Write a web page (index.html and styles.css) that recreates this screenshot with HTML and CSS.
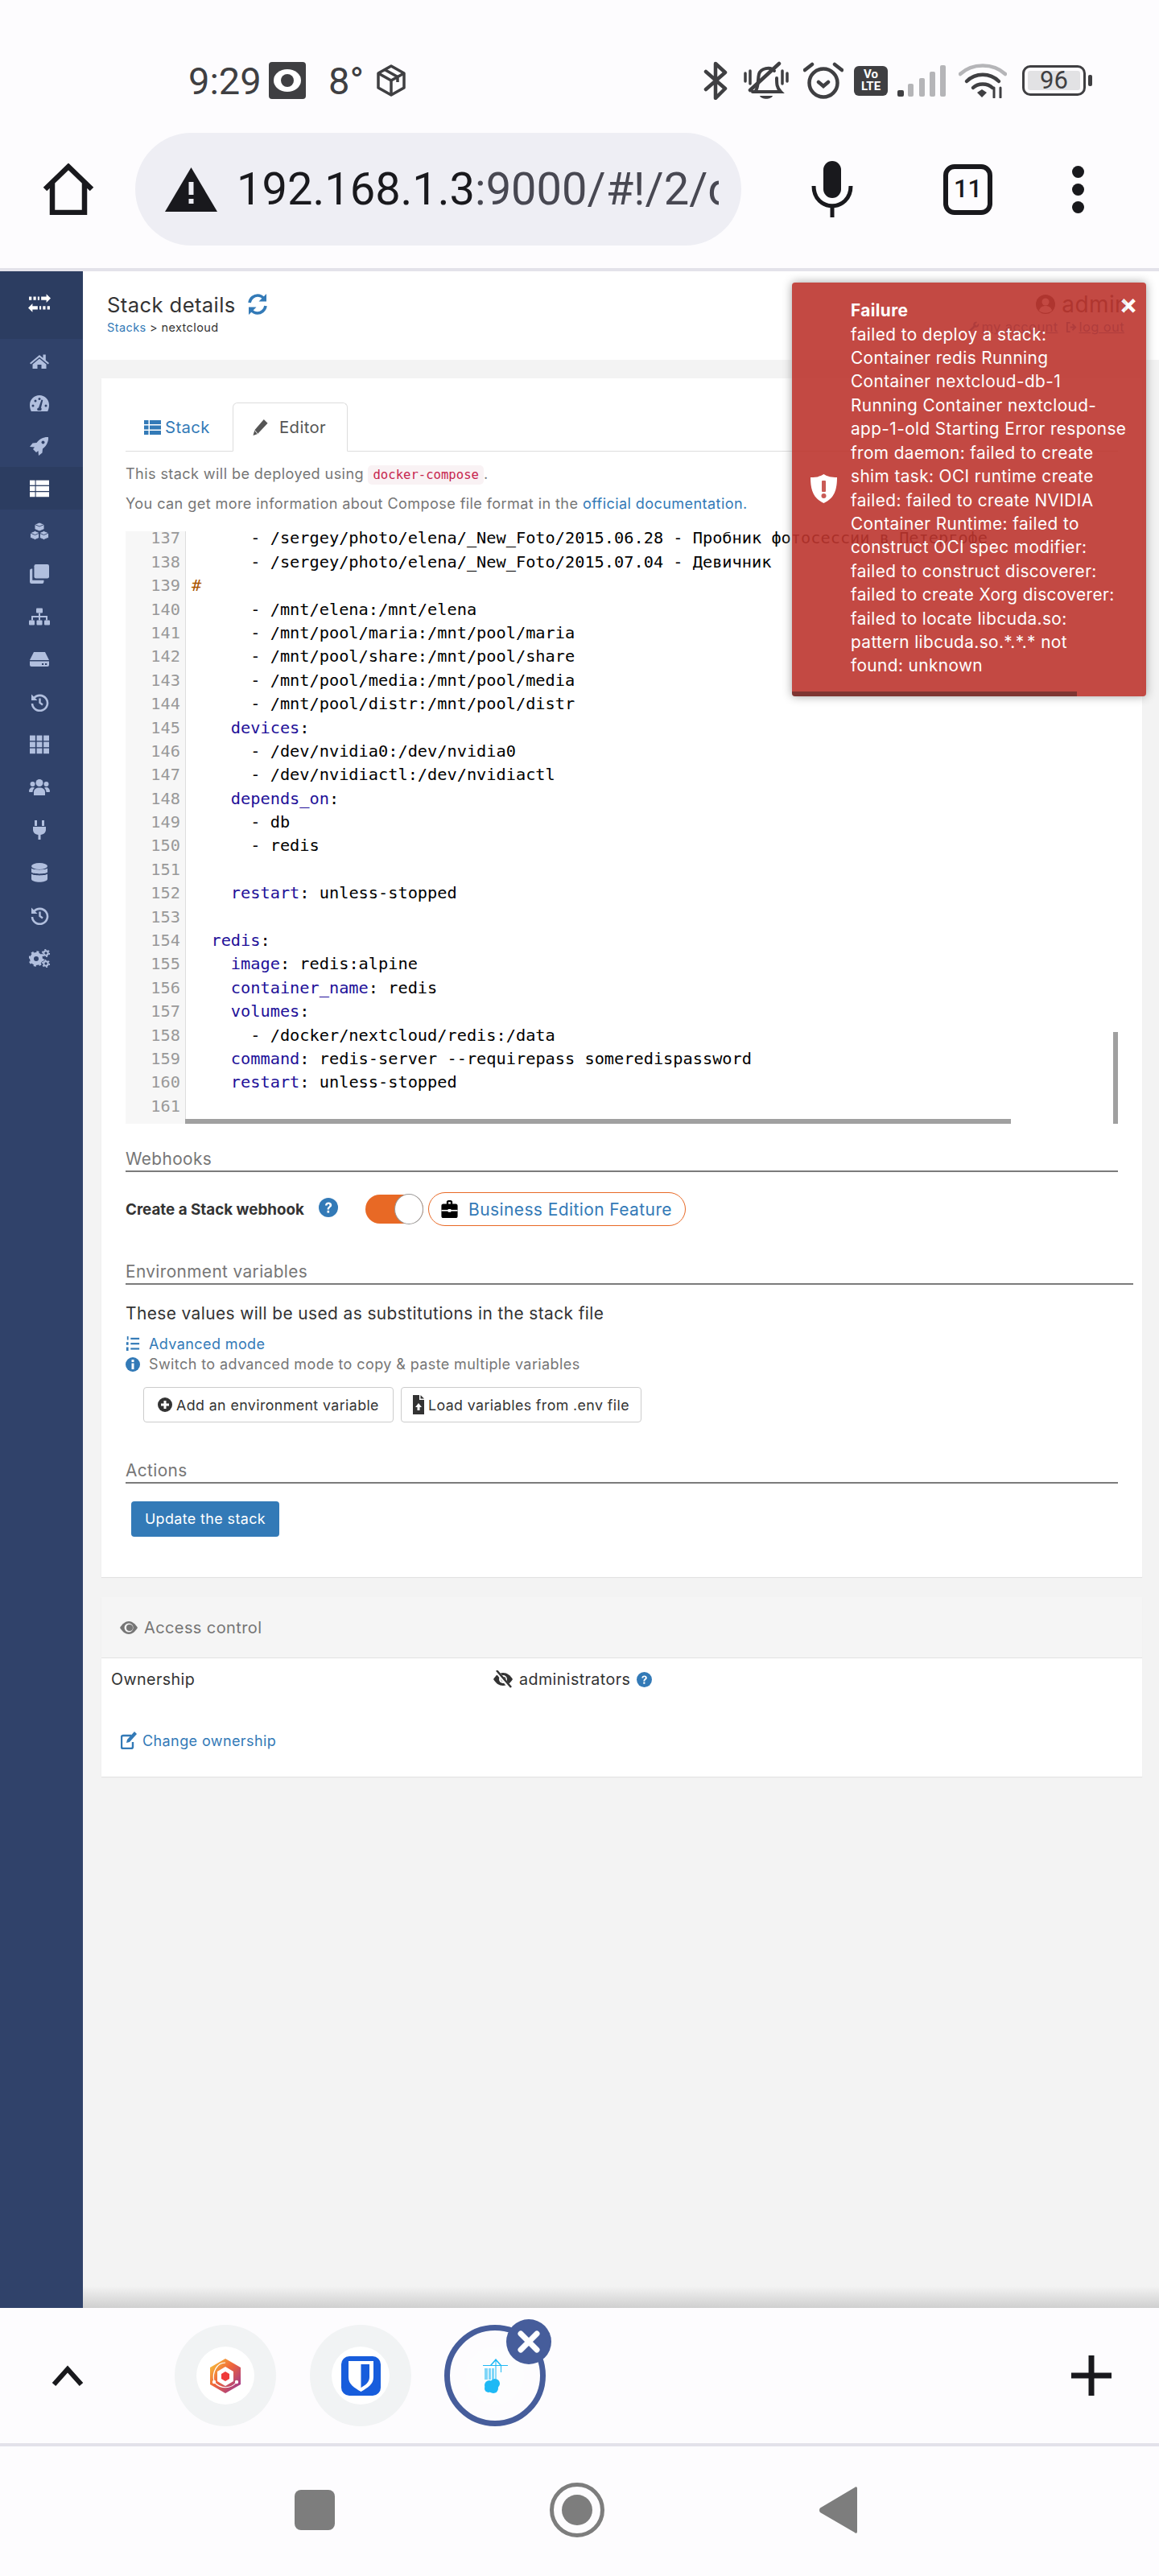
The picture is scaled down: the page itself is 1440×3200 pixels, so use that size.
FILE: index.html
```html
<!DOCTYPE html>
<html lang="en">
<head>
    <meta charset="UTF-8">
    <meta name="viewport" content="width=device-width, initial-scale=1.0">
    <title>Stack details</title>
    <link rel="stylesheet" href="styles.css">
</head>
<body>
    <svg class="sprites" width="0" height="0">
        <symbol id="i-history" viewBox="0 0 24 24">
            <path d="M5 7.500A9.500 9.500 0 1 1 3 14" fill="none" stroke="currentColor" stroke-width="2.600"/>
            <path d="M2 2.500l0 7.500 7.500 0z" fill="currentColor"/>
            <path d="M12.500 7.500v5.500l3.500 2.500" fill="none" stroke="currentColor" stroke-width="2.400"/>
        </symbol>
        <symbol id="i-help" viewBox="0 0 24 24">
            <circle cx="12" cy="12" r="12" fill="#337ab7"/>
            <path d="M8 9.500C8 7 9.800 5.600 12.200 5.600c2.400 0 4 1.500 4 3.500 0 3-3.200 2.800-3.200 5.400H10.600c0-3.700 2.900-3.400 2.900-5.300 0-.9-.6-1.500-1.400-1.500-1 0-1.500.6-1.600 1.800z" fill="#fff"/>
            <rect x="10.500" y="15.800" width="2.600" height="2.800" fill="#fff"/>
        </symbol>
    </svg>

    <div class="status-bar">
        <span class="status-time">9:29</span>
        <svg class="st-dnd" viewBox="0 0 46 46"><rect width="46" height="46" rx="4" fill="#3f3f42"/><ellipse cx="23" cy="23" rx="17" ry="14" fill="#fff"/><circle cx="23" cy="23" r="8" fill="#3f3f42"/></svg>
        <span class="status-temp">8°</span>
        <svg class="st-box" viewBox="0 0 40 40" fill="none" stroke="#3f3f42" stroke-width="3.500" stroke-linejoin="round"><path d="M20 2L36 11V29L20 38L4 29V11z"/><path d="M4 11L20 20L36 11M20 20V38M12 6.500L28 15.500V22"/></svg>
        <div class="status-right">
            <svg class="st-bt" viewBox="0 0 30 48" fill="none" stroke="#3f3f42" stroke-width="4.500" stroke-linejoin="round" stroke-linecap="round"><path d="M3 13L27 34L15 46V3L27 14L3 35"/></svg>
            <svg class="st-bell" viewBox="0 0 56 48" fill="none" stroke="#3f3f42" stroke-width="4" stroke-linecap="round"><path d="M14 38C19 33 17 24 19 16C21 9 33 6 38 12M41 21C41 28 41 33 46 38H11"/><path d="M8 36L44 3" stroke-width="4.500"/><path d="M2 15V25M8 12V28M48 12V28M54 15V25" stroke-width="3.500"/><path d="M20 43H36C34 48 22 48 20 43z" fill="#3f3f42" stroke="none"/></svg>
            <svg class="st-alarm" viewBox="0 0 50 46" fill="none" stroke="#3f3f42" stroke-width="4.500" stroke-linecap="round"><circle cx="25" cy="26" r="17.500"/><path d="M19 25L25 30L31 25M2 10L11 3M48 10L39 3"/></svg>
            <div class="st-volte"><span>Vo</span><span>LTE</span></div>
            <svg class="st-signal" viewBox="0 0 60 39"><rect x="0" y="31" width="8" height="8" rx="2" fill="#3f3f42"/><rect x="13" y="23" width="7" height="16" rx="2" fill="#b5b5b8"/><rect x="27" y="16" width="7" height="23" rx="2" fill="#b5b5b8"/><rect x="40" y="8" width="7" height="31" rx="2" fill="#b5b5b8"/><rect x="53" y="0" width="7" height="39" rx="2" fill="#b5b5b8"/></svg>
            <svg class="st-wifi" viewBox="0 0 60 43" fill="none" stroke-linecap="round"><path d="M2 13C17 -1 43 -1 58 13" stroke="#b5b5b8" stroke-width="4.500"/><path d="M10 22C21 11 39 11 50 22M18 30C24 24 36 24 42 30" stroke="#3f3f42" stroke-width="4.500"/><path d="M23 36L29 32L35 36L29 42z" fill="#3f3f42"/><path d="M44 30V42M52 30V42" stroke="#3f3f42" stroke-width="3"/></svg>
            <div class="st-battery"><div class="st-battery-fill">96</div></div>
            <div class="st-battery-nub"></div>
        </div>
    </div>

    <div class="browser-bar">
        <svg class="br-home" viewBox="0 0 64 64" fill="none" stroke="#19191d" stroke-width="6.500" stroke-linejoin="miter"><path d="M3 32L32 4L61 32M12 24V61H52V24"/></svg>
        <div class="address">
            <svg class="br-warn" viewBox="0 0 65 55"><path d="M32.500 0L65 55H0z" fill="#19191d"/><rect x="29.500" y="18" width="6" height="16" fill="#eeeef4"/><rect x="29.500" y="39" width="6" height="6" fill="#eeeef4"/></svg>
            <div class="url"><span class="url-host">192.168.1.3</span><span class="url-rest">:9000/#!/2/docker/stacks</span></div>
        </div>
        <svg class="br-mic" viewBox="0 0 52 70"><rect x="15" y="0" width="22" height="46" rx="11" fill="#19191d"/><path d="M3 31C3 64 49 64 49 31" fill="none" stroke="#19191d" stroke-width="5"/><rect x="23.500" y="56" width="5" height="14" fill="#19191d"/></svg>
        <div class="br-tabs">11</div>
        <div class="br-menu"><i></i><i></i><i></i></div>
    </div>
    <div class="bar-line"></div>

    <div class="app">
        <nav class="sidebar">
            <div class="side-top">
                <svg class="side-icon-top" viewBox="0 0 26 21" fill="#fff"><path d="M15 3h6V0l5 5-5 5V7h-6zM1 3h3v4H1zM6 3h3v4H6zM11 3h2v4h-2zM11 14H5v-3L0 16l5 5v-3h6zM25 14h-3v4h3zM20 14h-3v4h3zM15 14h-2v4h2z"/></svg>
            </div>
            <div class="side-item">
                <svg class="side-icon" viewBox="0 0 24 20" fill="currentColor"><path d="M12 3L0 13l1.300 1.500L12 5.800l10.700 8.700L24 13l-4.200-3.500V2.500h-3.300v4.300zM12 7.500L3.500 14.500V20h6v-5h5v5h6v-5.500z"/></svg>
            </div>
            <div class="side-item">
                <svg class="side-icon" viewBox="0 0 24 20"><path d="M12 0C5.400 0 0 5.400 0 12c0 3 .8 5.800 1.800 8h20.400c1-2.200 1.800-5 1.800-8 0-6.600-5.400-12-12-12z" fill="currentColor"/><g fill="#30426a"><circle cx="4" cy="13" r="1.500"/><circle cx="7" cy="7" r="1.500"/><circle cx="12" cy="4.500" r="1.500"/><circle cx="20" cy="13" r="1.500"/><path d="M14.500 5.500l1.800.5-2.300 9.500c1 .8 1 3-.5 3.500h-3.500c-1.500-1-1-3 1-3.500z"/></g></svg>
            </div>
            <div class="side-item">
                <svg class="side-icon" viewBox="0 0 24 24" fill="currentColor"><path d="M23 1C18 .5 12 3 8.500 8L3.500 8.500 0 13l6 .5L4 16l4 4 2.500-2 .5 6 4.500-3.500.5-5C21 12 23.500 6 23 1z"/><circle cx="16.500" cy="7.500" r="2" fill="#30426a"/></svg>
            </div>
            <div class="side-item side-item-active">
                <svg class="side-icon" viewBox="0 0 22 19" fill="#fff"><rect x="0" y="0" width="6" height="5.500"/><rect x="7" y="0" width="15" height="5.500"/><rect x="0" y="6.700" width="6" height="5.500"/><rect x="7" y="6.700" width="15" height="5.500"/><rect x="0" y="13.400" width="6" height="5.500"/><rect x="7" y="13.400" width="15" height="5.500"/></svg>
            </div>
            <div class="side-item">
                <svg class="side-icon" viewBox="0 0 24 22" fill="currentColor" stroke="#30426a" stroke-width=".9"><path d="M12 0l6 2.400v6L12 11 6 8.400v-6zM6.500 10.500l6 2.400v6l-6 2.600-6-2.600v-6zM17.500 10.500l6 2.400v6l-6 2.600-6-2.600v-6z"/><path d="M6 2.400l6 2.600 6-2.600M.5 13l6 2.500 6-2.500M11.500 13l6 2.500 6-2.500" fill="none"/></svg>
            </div>
            <div class="side-item">
                <svg class="side-icon" viewBox="0 0 22 22" fill="currentColor"><rect x="5" y="0" width="17" height="16" rx="2"/><path d="M3 5v13h13v2a2 2 0 0 1-2 2H2a2 2 0 0 1-2-2V7a2 2 0 0 1 2-2z"/></svg>
            </div>
            <div class="side-item">
                <svg class="side-icon side-icon-wide" viewBox="0 0 26 21" fill="currentColor"><rect x="9" y="0" width="8" height="6" rx="1"/><rect x="0" y="15" width="7" height="6" rx="1"/><rect x="9.500" y="15" width="7" height="6" rx="1"/><rect x="19" y="15" width="7" height="6" rx="1"/><path d="M12 6h2v3.500h9V15h-2v-3.500h-7V15h-2v-3.500H5V15H3V9.500h9z"/></svg>
            </div>
            <div class="side-item">
                <svg class="side-icon" viewBox="0 0 24 18" fill="currentColor"><path d="M5 0h14l5 10H0z"/><path d="M0 11.500h24V16a2 2 0 0 1-2 2H2a2 2 0 0 1-2-2z"/><rect x="15" y="14" width="2.200" height="2" fill="#30426a"/><rect x="19" y="14" width="2.200" height="2" fill="#30426a"/></svg>
            </div>
            <div class="side-item"><svg class="side-icon"><use href="#i-history"/></svg></div>
            <div class="side-item">
                <svg class="side-icon" viewBox="0 0 21 20" fill="currentColor"><rect x="0" y="0" width="6" height="5.800"/><rect x="7.500" y="0" width="6" height="5.800"/><rect x="15" y="0" width="6" height="5.800"/><rect x="0" y="7" width="6" height="5.800"/><rect x="7.500" y="7" width="6" height="5.800"/><rect x="15" y="7" width="6" height="5.800"/><rect x="0" y="14" width="6" height="5.800"/><rect x="7.500" y="14" width="6" height="5.800"/><rect x="15" y="14" width="6" height="5.800"/></svg>
            </div>
            <div class="side-item">
                <svg class="side-icon side-icon-wide" viewBox="0 0 26 20" fill="currentColor"><circle cx="13" cy="4.500" r="4.500"/><circle cx="4.500" cy="6" r="3"/><circle cx="21.500" cy="6" r="3"/><path d="M6 20v-4c0-3.500 3-5.500 7-5.500s7 2 7 5.500v4z"/><path d="M0 15c0-3 2-5 4.500-5 1 0 2 .3 2.500.8C5.500 12 4.500 14 4.500 16H1.500C.6 16 0 15.700 0 15zM26 15c0-3-2-5-4.500-5-1 0-2 .3-2.500.8 1.500 1.200 2.500 3.200 2.500 5.200h3c.9 0 1.500-.3 1.500-1z"/></svg>
            </div>
            <div class="side-item">
                <svg class="side-icon" viewBox="0 0 24 24" fill="currentColor"><rect x="6" y="0" width="3" height="7"/><rect x="15" y="0" width="3" height="7"/><path d="M4 8h16v3.500c0 3.500-2.500 6-6.500 6.500v6h-3v-6C6.500 17.500 4 15 4 11.500z"/></svg>
            </div>
            <div class="side-item">
                <svg class="side-icon" viewBox="0 0 20 24" fill="currentColor"><ellipse cx="10" cy="4" rx="10" ry="4"/><path d="M0 6.500C2 9 18 9 20 6.500V11.500C18 14 2 14 0 11.500zM0 13.500C2 16 18 16 20 13.500V20c-1 5-19 5-20 0z"/></svg>
            </div>
            <div class="side-item"><svg class="side-icon"><use href="#i-history"/></svg></div>
            <div class="side-item">
                <svg class="side-icon side-icon-wide" viewBox="0 0 26 24"><circle cx="9" cy="13" r="5.500" fill="none" stroke="currentColor" stroke-width="5"/><circle cx="9" cy="13" r="8.500" fill="none" stroke="currentColor" stroke-width="2.500" stroke-dasharray="3 3.700"/><circle cx="21" cy="6" r="2.700" fill="none" stroke="currentColor" stroke-width="2"/><circle cx="21" cy="6" r="4.300" fill="none" stroke="currentColor" stroke-width="1.600" stroke-dasharray="2 2.500"/><circle cx="21" cy="19" r="2.700" fill="none" stroke="currentColor" stroke-width="2"/><circle cx="21" cy="19" r="4.300" fill="none" stroke="currentColor" stroke-width="1.600" stroke-dasharray="2 2.500"/></svg>
            </div>
        </nav>

        <main class="main">
            <header class="page-head">
                <div>
                    <div class="page-title">
                        <span>Stack details</span>
                        <svg class="refresh" viewBox="0 0 26 26" fill="none" stroke="#337ab7" stroke-width="3.600"><path d="M3 11C4 5 9 2 13 2c3.500 0 6 1.500 8 4"/><path d="M23 15c-1 6-6 9-10 9-3.500 0-6-1.500-8-4"/><path d="M24 0v9.500h-9.500zM2 26v-9.500h9.500z" fill="#337ab7" stroke="none"/></svg>
                    </div>
                    <div class="crumbs"><a>Stacks</a> &gt; nextcloud</div>
                </div>
                <div class="user-box">
                    <div class="user-name">
                        <svg class="user-icon" viewBox="0 0 24 24"><circle cx="12" cy="12" r="12" fill="#333"/><circle cx="12" cy="9" r="4.500" fill="#fff"/><path d="M4 20c1-4 4-6 8-6s7 2 8 6c-4 3.500-12 3.500-16 0z" fill="#fff"/></svg>
                        <span>admin</span>
                    </div>
                    <div class="user-links">
                        <svg class="link-icon" viewBox="0 0 16 16" fill="#337ab7"><path d="M15 3l-3 3-2-2 3-3C10 0 7 2 8 6L1 13l2 2 7-7c4 1 6-2 5-5z"/></svg>
                        <a>my account</a>
                        <svg class="link-icon link-icon-gap" viewBox="0 0 16 16" fill="none" stroke="#337ab7" stroke-width="2"><path d="M6 2H2v12h4M6 8h5M9 4l4 4-4 4"/></svg>
                        <a>log out</a>
                    </div>
                </div>
            </header>

            <div class="content">
                <section class="card">
                    <div class="tabs">
                        <div class="tab tab-plain">
                            <svg class="tab-icon" viewBox="0 0 21 18" fill="#337ab7"><rect width="5.500" height="5"/><rect x="7" width="14" height="5"/><rect y="6.500" width="5.500" height="5"/><rect x="7" y="6.500" width="14" height="5"/><rect y="13" width="5.500" height="5"/><rect x="7" y="13" width="14" height="5"/></svg>
                            Stack
                        </div>
                        <div class="tab tab-current">
                            <svg class="tab-icon" viewBox="0 0 21 21" fill="#555"><path d="M15 0l5 5L7 19 1 21l2-7z"/><path d="M3 14l4 5" stroke="#fff" stroke-width="1"/></svg>
                            Editor
                        </div>
                    </div>
                    <p class="hint hint-first">This stack will be deployed using <code class="tag">docker-compose</code>.</p>
                    <p class="hint hint-second">You can get more information about Compose file format in the <a>official documentation.</a></p>

                    <div class="editor">
                        <div class="gutter">
                            <div class="scroll-shift">
                                <div>137</div><div>138</div><div>139</div><div>140</div><div>141</div>
                                <div>142</div><div>143</div><div>144</div><div>145</div><div>146</div>
                                <div>147</div><div>148</div><div>149</div><div>150</div><div>151</div>
                                <div>152</div><div>153</div><div>154</div><div>155</div><div>156</div>
                                <div>157</div><div>158</div><div>159</div><div>160</div><div>161</div>
                            </div>
                        </div>
                        <div class="code">
                            <div class="scroll-shift">
                                <div>      - /sergey/photo/elena/_New_Foto/2015.06.28 - Пробник фотосессии в Петергофе</div>
                                <div>      - /sergey/photo/elena/_New_Foto/2015.07.04 - Девичник</div>
                                <div class="c">#</div>
                                <div>      - /mnt/elena:/mnt/elena</div>
                                <div>      - /mnt/pool/maria:/mnt/pool/maria</div>
                                <div>      - /mnt/pool/share:/mnt/pool/share</div>
                                <div>      - /mnt/pool/media:/mnt/pool/media</div>
                                <div>      - /mnt/pool/distr:/mnt/pool/distr</div>
                                <div>    <b>devices</b>:</div>
                                <div>      - /dev/nvidia0:/dev/nvidia0</div>
                                <div>      - /dev/nvidiactl:/dev/nvidiactl</div>
                                <div>    <b>depends_on</b>:</div>
                                <div>      - db</div>
                                <div>      - redis</div>
                                <div></div>
                                <div>    <b>restart</b>: unless-stopped</div>
                                <div></div>
                                <div>  <b>redis</b>:</div>
                                <div>    <b>image</b>: redis:alpine</div>
                                <div>    <b>container_name</b>: redis</div>
                                <div>    <b>volumes</b>:</div>
                                <div>      - /docker/nextcloud/redis:/data</div>
                                <div>    <b>command</b>: redis-server --requirepass someredispassword</div>
                                <div>    <b>restart</b>: unless-stopped</div>
                                <div></div>
                            </div>
                        </div>
                        <div class="scroll-h"></div>
                        <div class="scroll-v"></div>
                    </div>

                    <h3 class="form-title form-title-webhooks">Webhooks</h3>
                    <div class="webhook-row">
                        <span class="webhook-label">Create a Stack webhook</span>
                        <svg class="help help-big"><use href="#i-help"/></svg>
                        <div class="switch"><div class="switch-knob"></div></div>
                        <div class="be-badge">
                            <svg class="be-icon" viewBox="0 0 22 24"><path d="M7 5V2.500C7 1 8 0 9.500 0h3C14 0 15 1 15 2.500V5h4.500C21 5 22 6 22 7.500v14c0 1.500-1 2.500-2.500 2.500h-17C1 24 0 23 0 21.500v-14C0 6 1 5 2.500 5zM9.500 2.500V5h3V2.500z" fill="#000" fill-rule="evenodd"/><rect y="13" width="22" height="1.800" fill="#fff"/><rect x="9" y="12" width="4" height="4" fill="#fff"/></svg>
                            <span>Business Edition Feature</span>
                        </div>
                    </div>

                    <h3 class="form-title form-title-env">Environment variables</h3>
                    <p class="env-desc">These values will be used as substitutions in the stack file</p>
                    <div class="env-line env-line-link">
                        <svg class="env-icon" viewBox="0 0 18 20" fill="#337ab7"><rect x="6" y="2" width="12" height="2.400"/><rect x="6" y="9" width="12" height="2.400"/><rect x="6" y="16" width="12" height="2.400"/><rect x="1" y="0" width="2" height="5"/><rect x="0" y="8" width="3" height="4"/><rect x="0" y="15" width="3" height="5"/></svg>
                        <a>Advanced mode</a>
                    </div>
                    <div class="env-line env-line-note">
                        <svg class="env-icon" viewBox="0 0 18 18"><circle cx="9" cy="9" r="9" fill="#337ab7"/><rect x="7.500" y="3" width="3" height="3" fill="#fff"/><rect x="7.500" y="7.500" width="3" height="7.500" fill="#fff"/></svg>
                        <span>Switch to advanced mode to copy &amp; paste multiple variables</span>
                    </div>
                    <div class="env-buttons">
                        <div class="btn btn-add">
                            <svg class="btn-icon" viewBox="0 0 18 18"><circle cx="9" cy="9" r="9" fill="#333"/><rect x="4" y="7.500" width="10" height="3" fill="#fff"/><rect x="7.500" y="4" width="3" height="10" fill="#fff"/></svg>
                            Add an environment variable
                        </div>
                        <div class="btn btn-load">
                            <svg class="btn-icon btn-icon-file" viewBox="0 0 14 24"><path d="M0 0h8v6h6v18H0z" fill="#333"/><path d="M9.500 0L14 4.500H9.500z" fill="#333"/><path d="M7 10l4 5H8.500v4h-3v-4H3z" fill="#fff"/></svg>
                            Load variables from .env file
                        </div>
                    </div>

                    <h3 class="form-title form-title-actions">Actions</h3>
                    <div class="btn-primary">Update the stack</div>
                </section>

                <section class="access-card">
                    <div class="access-head">
                        <svg class="access-eye" viewBox="0 0 22 16"><path d="M0 8C3 3 7 0 11 0s8 3 11 8c-3 5-7 8-11 8S3 13 0 8z" fill="#767676"/><circle cx="11" cy="8" r="5.500" fill="#f5f5f5"/><circle cx="12" cy="8" r="4" fill="#767676"/></svg>
                        <span>Access control</span>
                    </div>
                    <div class="access-row">
                        <span class="access-key">Ownership</span>
                        <div class="access-value">
                            <svg class="access-slash" viewBox="0 0 24 22"><path d="M0 11C3 6 7 3 12 3s9 3 12 8c-3 5-7 8-12 8S3 16 0 11z" fill="#333"/><circle cx="12" cy="11" r="5" fill="#fff"/><circle cx="12.500" cy="11" r="3" fill="#333"/><path d="M3 0L21 22" stroke="#fff" stroke-width="4.500"/><path d="M4 0L22 21" stroke="#333" stroke-width="2.500"/></svg>
                            <span>administrators</span>
                            <svg class="help help-small"><use href="#i-help"/></svg>
                        </div>
                    </div>
                    <div class="access-change">
                        <svg class="access-edit" viewBox="0 0 20 22" fill="none" stroke="#337ab7" stroke-width="2.400"><path d="M13 5H3a2 2 0 0 0-2 2v12a2 2 0 0 0 2 2h10a2 2 0 0 0 2-2v-6"/><path d="M17 0l3 3-9 10-4 1 1-4z" fill="#337ab7" stroke="none"/></svg>
                        <a>Change ownership</a>
                    </div>
                </section>
            </div>
            <div class="main-fade"></div>
        </main>

        <aside class="toast">
            <svg class="toast-shield" viewBox="0 0 33 36"><path d="M16.500 0C21 3 26 4 33 4c0 15-3 26-16.500 32C3 30 0 19 0 4c7 0 12-1 16.500-4z" fill="#fff"/><rect x="14" y="8" width="5" height="14" rx="1" fill="#c44a44"/><circle cx="16.500" cy="27" r="3" fill="#c44a44"/></svg>
            <div class="toast-text">
                <div class="toast-title">Failure</div>
                failed to deploy a stack:<br>
                Container redis Running<br>
                Container nextcloud-db-1<br>
                Running Container nextcloud-<br>
                app-1-old Starting Error response<br>
                from daemon: failed to create<br>
                shim task: OCI runtime create<br>
                failed: failed to create NVIDIA<br>
                Container Runtime: failed to<br>
                construct OCI spec modifier:<br>
                failed to construct discoverer:<br>
                failed to create Xorg discoverer:<br>
                failed to locate libcuda.so:<br>
                pattern libcuda.so.*.*.* not<br>
                found: unknown
            </div>
            <div class="toast-close">×</div>
            <div class="toast-progress"></div>
        </aside>
    </div>

    <div class="tab-strip">
        <svg class="strip-up" viewBox="0 0 40 26" fill="none" stroke="#19191d" stroke-width="6"><path d="M3 24L20 5L37 24"/></svg>
        <div class="tab-dot tab-dot-first">
            <div class="tab-dot-inner">
                <svg class="logo-hex" viewBox="0 0 38 43">
                    <defs><linearGradient id="hexfill" x1="0" y1="0" x2="1" y2="1"><stop offset="0" stop-color="#f7d23a"/><stop offset=".45" stop-color="#f0653a"/><stop offset="1" stop-color="#8e2f9e"/></linearGradient></defs>
                    <path d="M19 0L38 11V32L19 43L0 32V11z" fill="url(#hexfill)"/>
                    <path d="M5 29C2 16 9 5 19 5M33 29C26 38 13 38 5 29" fill="none" stroke="#fff" stroke-width="1.200"/>
                    <path d="M19 10L29 16V28L19 34L9 28V16z" fill="#fff"/>
                    <path d="M19 16L24 19V25L19 28L14 25V19z" fill="#ef3b3b"/>
                    <circle cx="5" cy="29" r="2.200" fill="#fff"/><circle cx="33" cy="29" r="2.200" fill="#fff"/>
                </svg>
            </div>
        </div>
        <div class="tab-dot tab-dot-second">
            <div class="tab-dot-inner">
                <svg class="logo-bw" viewBox="0 0 49 49"><rect width="49" height="49" rx="10" fill="#175ddc"/><path d="M9 6H40V26C40 35 33 39 24.500 44C16 39 9 35 9 26z" fill="#fff"/><path d="M24.500 10H35V26C35 32 30 36 24.500 39z" fill="#175ddc"/></svg>
            </div>
        </div>
        <div class="tab-dot tab-dot-active">
            <div class="tab-dot-inner tab-dot-inner-active">
                <svg class="logo-crane" viewBox="0 0 31 43" fill="#1fb9f5"><path d="M0 8H31V9H0zM15.500 0h1v26h-1zM16 0L23 8h-2L16 2.500 11 8H9z"/><rect x="22" y="9" width="1" height="8"/><path d="M2 12h12v14H2z" fill="#7fd6f8"/><path d="M6 12h1v14H6zM10 12h1v14h-1z" fill="#fff"/><circle cx="8" cy="33" r="6"/><circle cx="15" cy="31" r="6"/><circle cx="13" cy="37" r="6"/><circle cx="7" cy="37" r="5"/></svg>
            </div>
            <div class="tab-close">
                <svg viewBox="0 0 56 56" fill="none" stroke="#fff" stroke-width="7" stroke-linecap="round"><path d="M18 18L38 38M38 18L18 38"/></svg>
            </div>
        </div>
        <svg class="strip-plus" viewBox="0 0 50 50" fill="#19191d"><rect y="21.500" width="50" height="7"/><rect x="21.500" width="7" height="50"/></svg>
    </div>
    <div class="bar-line"></div>

    <div class="nav-bar">
        <div class="nav-square"></div>
        <div class="nav-home"><div></div></div>
        <svg class="nav-back" viewBox="0 0 47 58"><path d="M47 2V56C47 58 45 58.500 44 57L1 32C-.3 30.500-.3 28 1 26.500L44 1C45 -.5 47 0 47 2z" fill="#7d7d7d"/></svg>
    </div>
</body>
</html>
```

FILE: styles.css
```css
* {
    box-sizing: border-box;
}

body {
    width: 1440px;
    height: 3200px;
    margin: 0;
    display: flex;
    flex-direction: column;
    overflow: hidden;
    background-color: #fdfcfe;
    font-family: Inter, "Open Sans", sans-serif;
    letter-spacing: 0.4px;
    color: #333;
}

a {
    color: #337ab7;
}

.sprites {
    position: absolute;
}

/* phone status bar */
.status-bar {
    height: 165px;
    padding: 35px 83px 0 234px;
    display: flex;
    align-items: center;
    font-family: Roboto, sans-serif;
    font-size: 47px;
    letter-spacing: 0;
    color: #3f3f42;
}

.status-time {
    width: 100px;
}

.st-dnd {
    width: 46px;
    height: 46px;
}

.status-temp {
    width: 58px;
    margin-left: 28px;
}

.st-box {
    width: 40px;
    height: 40px;
}

.status-right {
    margin-left: auto;
    display: flex;
    align-items: center;
}

.st-bt {
    width: 30px;
    height: 48px;
}

.st-bell {
    width: 56px;
    height: 48px;
    margin-left: 20px;
}

.st-alarm {
    width: 50px;
    height: 46px;
    margin-left: 18px;
}

.st-volte {
    width: 42px;
    height: 37px;
    margin-left: 13px;
    border-radius: 6px;
    background-color: #3f3f42;
    color: #fff;
    font-size: 15px;
    line-height: 15px;
    font-weight: 700;
    display: flex;
    flex-direction: column;
    align-items: center;
    justify-content: center;
}

.st-signal {
    width: 60px;
    height: 39px;
    margin-left: 12px;
}

.st-wifi {
    width: 60px;
    height: 43px;
    margin-left: 16px;
}

.st-battery {
    width: 79px;
    height: 38px;
    margin-left: 19px;
    padding: 4px;
    border: 3.5px solid #3f3f42;
    border-radius: 10px;
}

.st-battery-fill {
    height: 100%;
    border-radius: 3px;
    background-color: #e2e2e4;
    font-size: 31px;
    line-height: 24px;
    text-align: center;
}

.st-battery-nub {
    width: 5px;
    height: 14px;
    margin-left: 3px;
    border-radius: 2px;
    background-color: #3f3f42;
}

/* browser toolbar */
.browser-bar {
    height: 168px;
    padding: 0 0 28px 53px;
    display: flex;
    align-items: center;
    letter-spacing: 0;
}

.br-home {
    width: 64px;
    height: 64px;
}

.address {
    width: 753px;
    height: 140px;
    margin-left: 51px;
    padding: 0 28px 0 37px;
    border-radius: 70px;
    background-color: #eeeef4;
    display: flex;
    align-items: center;
}

.br-warn {
    width: 65px;
    height: 55px;
    flex-shrink: 0;
}

.url {
    margin-left: 24px;
    overflow: hidden;
    white-space: nowrap;
    font-family: Roboto, sans-serif;
    font-size: 56px;
}

.url-host {
    color: #19191d;
}

.url-rest {
    color: #484852;
}

.br-mic {
    width: 52px;
    height: 70px;
    margin-left: 87px;
}

.br-tabs {
    width: 61px;
    height: 63px;
    margin-left: 112px;
    border: 6px solid #19191d;
    border-radius: 14px;
    font-family: Roboto, sans-serif;
    font-size: 31px;
    font-weight: 500;
    line-height: 50px;
    text-align: center;
    color: #19191d;
}

.br-menu {
    margin-left: 99px;
    display: flex;
    flex-direction: column;
    gap: 7px;
}

.br-menu i {
    display: block;
    width: 15px;
    height: 15px;
    border-radius: 50%;
    background-color: #19191d;
}

.bar-line {
    height: 4px;
    background-color: #e3e2ea;
}

/* portainer app */
.app {
    position: relative;
    height: 2530px;
    display: flex;
    background-color: #f3f3f3;
}

.sidebar {
    width: 103px;
    flex-shrink: 0;
    background-color: #30426a;
    color: #b1bfde;
}

.side-top {
    height: 84px;
    padding: 0 6px 6px 0;
    background-color: #2c3d61;
    display: flex;
    align-items: center;
    justify-content: center;
}

.side-item {
    height: 53px;
    padding-right: 6px;
    display: flex;
    align-items: center;
    justify-content: center;
}

.side-item-active {
    background-color: #2c3d61;
}

.side-icon {
    width: 24px;
    height: 24px;
}

.side-icon-wide {
    width: 26px;
}

.side-icon-top {
    width: 28px;
    height: 23px;
}

.main {
    flex: 1;
    display: flex;
    flex-direction: column;
}

.page-head {
    height: 110px;
    padding: 26px 43px 0 30px;
    background-color: #fff;
    display: flex;
    justify-content: space-between;
}

.page-title {
    display: flex;
    align-items: center;
    gap: 14px;
    height: 30px;
    font-size: 25.6px;
    color: #333;
}

.refresh {
    width: 26px;
    height: 26px;
}

.crumbs {
    margin-top: 5px;
    font-size: 14.5px;
    line-height: 18px;
    color: #333;
}

.user-box {
    display: flex;
    flex-direction: column;
    align-items: flex-end;
}

.user-name {
    height: 30px;
    margin-right: -5px;
    display: flex;
    align-items: center;
    gap: 8px;
    font-size: 28px;
}

.user-icon {
    width: 24px;
    height: 24px;
}

.user-links {
    margin-top: 4px;
    display: flex;
    align-items: center;
    font-size: 16.5px;
    line-height: 18px;
}

.user-links a {
    text-decoration: underline;
}

.link-icon {
    width: 15px;
    height: 15px;
    margin-right: 2px;
}

.link-icon-gap {
    margin-left: 9px;
}

.content {
    padding: 23px 21px 0 23px;
}

.card {
    padding: 30px 30px 50px;
    background-color: #fff;
    box-shadow: 0 1px 1px #e3e3e3;
}

.tabs {
    height: 61px;
    display: flex;
    border-bottom: 1px solid #ddd;
}

.tab {
    height: 61px;
    display: flex;
    align-items: center;
    font-size: 20.3px;
}

.tab-plain {
    width: 133px;
    padding-left: 23px;
    gap: 5px;
    color: #337ab7;
}

.tab-current {
    width: 143px;
    padding-left: 23px;
    gap: 13px;
    border: 1px solid #ddd;
    border-bottom-color: #fff;
    border-radius: 6px 6px 0 0;
    color: #555;
}

.tab-icon {
    width: 21px;
    height: 20px;
}

.hint {
    margin: 0;
    font-size: 18.1px;
    line-height: 28px;
    color: #767676;
}

.hint-first {
    margin-top: 13px;
}

.hint-second {
    margin-top: 7px;
}

.tag {
    padding: 3px 6px;
    border-radius: 5px;
    background-color: #f9f2f4;
    font-family: "DejaVu Sans Mono", monospace;
    font-size: 15.6px;
    letter-spacing: 0;
    color: #c7254e;
}

.editor {
    position: relative;
    height: 736px;
    margin-top: 21px;
    display: flex;
    overflow: hidden;
    font-family: "DejaVu Sans Mono", monospace;
    font-size: 20.3px;
    line-height: 29.4px;
    letter-spacing: 0;
    color: #000;
}

.gutter {
    width: 75px;
    flex-shrink: 0;
    padding-right: 6px;
    border-right: 1px solid #ddd;
    background-color: #f7f7f7;
    color: #999;
    text-align: right;
}

.code {
    padding-left: 7px;
}

.scroll-shift {
    margin-top: -5.6px;
}

.scroll-shift div {
    height: 29.4px;
    white-space: pre;
}

.code b {
    font-weight: 400;
    color: #219;
}

.code .c {
    color: #a50;
}

.scroll-h {
    position: absolute;
    left: 74px;
    bottom: 0;
    width: 1026px;
    height: 6px;
    background-color: #a0a0a0;
}

.scroll-v {
    position: absolute;
    right: 0;
    bottom: 0;
    width: 6px;
    height: 114px;
    background-color: #a0a0a0;
}

.form-title {
    height: 31px;
    margin: 0;
    border-bottom: 2px solid #7b7b7b;
    font-size: 20.8px;
    font-weight: 400;
    line-height: 30px;
    color: #767676;
}

.form-title-webhooks {
    margin-top: 29px;
}

.form-title-env {
    margin: 42px -19px 0 0;
}

.form-title-actions {
    margin-top: 45px;
}

.webhook-row {
    height: 42px;
    margin-top: 25px;
    display: flex;
    align-items: center;
}

.webhook-label {
    width: 240px;
    font-size: 18.8px;
    font-weight: 700;
    letter-spacing: 0;
    color: #333;
}

.help {
    flex-shrink: 0;
}

.help-big {
    width: 24px;
    height: 24px;
    margin-top: -4px;
}

.switch {
    width: 72px;
    height: 36px;
    margin-left: 34px;
    border-radius: 18px;
    background-color: #e86925;
    position: relative;
}

.switch-knob {
    position: absolute;
    top: -1px;
    right: 0;
    width: 36px;
    height: 38px;
    border: 1px solid #999;
    border-radius: 50%;
    background-color: #fff;
}

.be-badge {
    width: 320px;
    height: 42px;
    margin-left: 6px;
    padding-left: 15px;
    border: 1px solid #e86925;
    border-radius: 21px;
    display: flex;
    align-items: center;
    gap: 13px;
    font-size: 21px;
    color: #337ab7;
}

.be-icon {
    width: 21px;
    height: 22px;
}

.env-desc {
    margin: 22px 0 0;
    font-size: 20.9px;
    line-height: 28px;
    color: #333;
}

.env-line {
    display: flex;
    align-items: center;
    gap: 11px;
    font-size: 18px;
}

.env-line-link {
    height: 26px;
    margin-top: 10px;
}

.env-line-note {
    height: 25px;
    color: #767676;
}

.env-icon {
    width: 18px;
    height: 18px;
}

.env-buttons {
    margin: 16px 0 0 22px;
    display: flex;
    gap: 9px;
}

.btn {
    height: 44px;
    border: 1px solid #ccc;
    border-radius: 4px;
    display: flex;
    align-items: center;
    justify-content: center;
    gap: 5px;
    font-size: 17.8px;
    color: #333;
}

.btn-add {
    width: 311px;
}

.btn-load {
    width: 299px;
}

.btn-icon {
    width: 18px;
    height: 18px;
}

.btn-icon-file {
    width: 14px;
    height: 24px;
}

.btn-primary {
    width: 184px;
    height: 44px;
    margin: 22px 0 0 7px;
    border-radius: 4px;
    background-color: #337ab7;
    color: #fff;
    font-size: 17.9px;
    line-height: 44px;
    text-align: center;
}

.access-card {
    margin-top: 25px;
    padding-bottom: 30px;
    background-color: #fff;
    box-shadow: 0 1px 1px #e3e3e3;
}

.access-head {
    height: 76px;
    padding-left: 23px;
    border-bottom: 1px solid #e2e2e2;
    background-color: #f5f5f5;
    display: flex;
    align-items: center;
    gap: 8px;
    font-size: 20px;
    color: #767676;
}

.access-eye {
    width: 22px;
    height: 16px;
}

.access-row {
    height: 30px;
    margin-top: 11px;
    padding-left: 12px;
    display: flex;
    align-items: center;
    font-size: 19.7px;
}

.access-key {
    width: 475px;
}

.access-value {
    display: flex;
    align-items: center;
    gap: 8px;
}

.access-slash {
    width: 24px;
    height: 22px;
}

.help-small {
    width: 19px;
    height: 19px;
}

.access-change {
    height: 30px;
    margin-top: 46px;
    padding-left: 24px;
    display: flex;
    align-items: center;
    gap: 7px;
    font-size: 18px;
}

.access-edit {
    width: 20px;
    height: 22px;
}

.main-fade {
    height: 27px;
    margin-top: auto;
    background: linear-gradient(#f3f3f3, #cfcfcf);
}

/* error notification, over the page */
.toast {
    position: absolute;
    top: 14px;
    left: 984px;
    width: 440px;
    height: 514px;
    padding: 20px 0 23px 23px;
    border-radius: 4px;
    background-color: #bd362f;
    box-shadow: 0 0 12px #999;
    opacity: 0.9;
    display: flex;
    align-items: center;
    gap: 17px;
    overflow: hidden;
    color: #fff;
    font-size: 20.8px;
    line-height: 29.4px;
}

.toast-shield {
    width: 33px;
    height: 36px;
    flex-shrink: 0;
}

.toast-text {
    white-space: nowrap;
}

.toast-title {
    font-weight: 700;
}

.toast-close {
    position: absolute;
    top: 10px;
    right: 10px;
    font-size: 34px;
    font-weight: 700;
    line-height: 34px;
}

.toast-progress {
    position: absolute;
    left: 0;
    bottom: 0;
    width: 354px;
    height: 6px;
    background-color: #000;
    opacity: 0.4;
}

/* browser tab strip */
.tab-strip {
    height: 168px;
    padding: 0 59px 0 64px;
    display: flex;
    align-items: center;
}

.strip-up {
    width: 40px;
    height: 26px;
}

.tab-dot {
    position: relative;
    width: 126px;
    height: 126px;
    border-radius: 50%;
    background-color: #f1f3f4;
    display: flex;
    align-items: center;
    justify-content: center;
}

.tab-dot-first {
    margin-left: 113px;
}

.tab-dot-second {
    margin-left: 42px;
}

.tab-dot-active {
    margin-left: 41px;
    border: 7px solid #465d9b;
    background-color: #fdfcfe;
}

.tab-dot-inner {
    width: 72px;
    height: 72px;
    border-radius: 50%;
    background-color: #fff;
    display: flex;
    align-items: center;
    justify-content: center;
}

.tab-dot-inner-active {
    background-color: #fdfdfe;
}

.logo-hex {
    width: 38px;
    height: 43px;
}

.logo-bw {
    width: 49px;
    height: 49px;
}

.logo-crane {
    width: 31px;
    height: 43px;
}

.tab-close {
    position: absolute;
    top: -14px;
    left: 70px;
    width: 56px;
    height: 56px;
    border-radius: 50%;
    background-color: #465d9b;
}

.strip-plus {
    width: 50px;
    height: 50px;
    margin-left: auto;
}

/* android navigation */
.nav-bar {
    height: 161px;
    padding: 0 0 4px 366px;
    display: flex;
    align-items: center;
    gap: 267px;
}

.nav-square {
    width: 50px;
    height: 50px;
    border-radius: 8px;
    background-color: #7d7d7d;
}

.nav-home {
    width: 68px;
    height: 68px;
    border: 5px solid #7d7d7d;
    border-radius: 50%;
    display: flex;
    align-items: center;
    justify-content: center;
}

.nav-home div {
    width: 38px;
    height: 38px;
    border-radius: 50%;
    background-color: #7d7d7d;
}

.nav-back {
    width: 47px;
    height: 58px;
}
```
